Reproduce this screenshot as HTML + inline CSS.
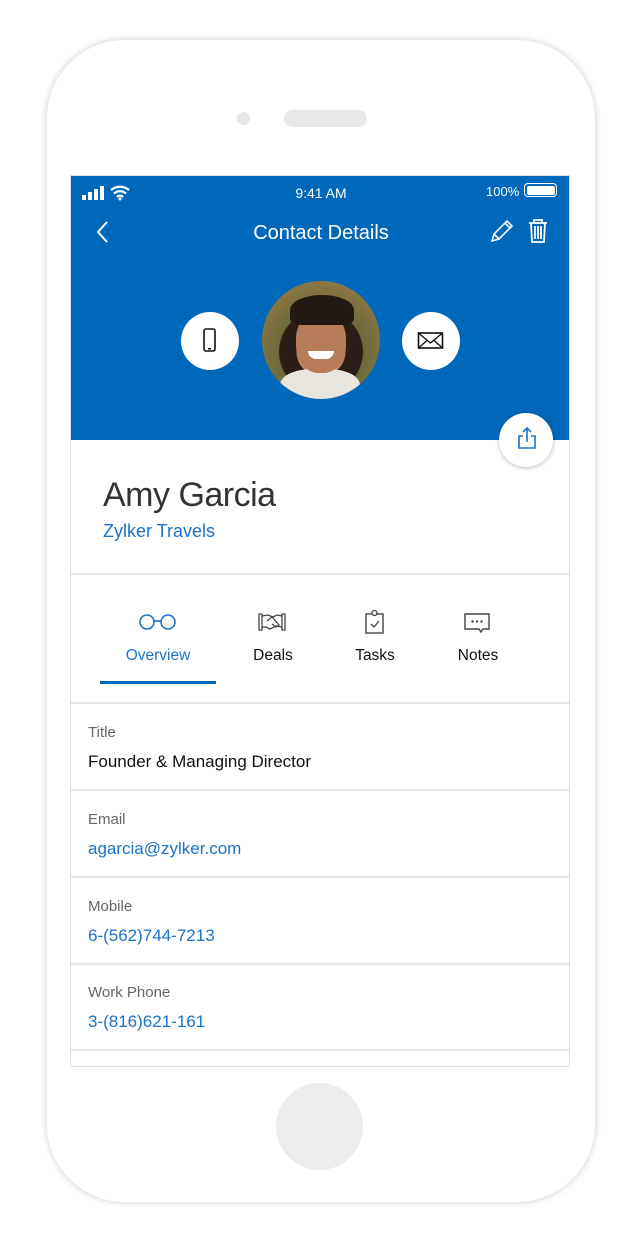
<!DOCTYPE html>
<html><head><style>
body{margin:0;width:640px;height:1240px;background:#fff;position:relative;font-family:"Liberation Sans",sans-serif;overflow:hidden}
.frame{position:absolute;left:45px;top:38px;width:548px;height:1162px;border-radius:80px;background:#fff;border:2px solid #ececec;box-shadow:0 0 6px #e6e6e6}
.screen{position:absolute;left:70px;top:175px;width:500px;height:892px;background:#fff;border:1px solid #ddd;box-sizing:border-box;overflow:hidden}
.abs{position:absolute}
.sep{position:absolute;left:0;right:0;height:2px;background:#e5e5e5}
.lbl{position:absolute;left:17px;font-size:15px;color:#666}
.val{position:absolute;left:17px;font-size:17px}
</style></head><body>
<div class="frame"></div>
<div class="abs" style="left:237px;top:112px;width:13px;height:13px;border-radius:50%;background:#e8e8e8"></div>
<div class="abs" style="left:284px;top:110px;width:83px;height:17px;border-radius:9px;background:#e8e8e8"></div>
<div class="abs" style="left:276px;top:1083px;width:87px;height:87px;border-radius:50%;background:#ececec"></div>
<div class="screen">
 <div class="abs" style="left:0;top:0;width:500px;height:264px;background:#0068ba"></div>
 <svg class="abs" style="left:10px;top:8px" width="60" height="18"><rect x="1" y="11" width="4" height="5" fill="#fff"/><rect x="7" y="8" width="4" height="8" fill="#fff"/><rect x="13" y="5" width="4" height="11" fill="#fff"/><rect x="19" y="2" width="4" height="14" fill="#fff"/><path d="M30 6a14 14 0 0 1 18 0M33 9.5a9 9 0 0 1 12 0M36 13a4 4 0 0 1 6 0" stroke="#fff" stroke-width="2.2" fill="none"/><circle cx="39" cy="15" r="1.5" fill="#fff"/></svg>
 <div class="abs" style="left:0;width:500px;top:9px;text-align:center;color:#fff;font-size:14px">9:41 AM</div>
 <div class="abs" style="left:415px;top:8px;color:#fff;font-size:13px">100%</div>
 <div class="abs" style="left:453px;top:7px;width:33px;height:14px;border:1.5px solid #fff;border-radius:4px;box-sizing:border-box;padding:1.5px"><div style="background:#fff;height:100%;border-radius:2px"></div></div>
 <svg class="abs" style="left:24px;top:44px" width="18" height="24"><path d="M12 2 3 12l9 10" stroke="#fff" stroke-width="2" fill="none"/></svg>
 <div class="abs" style="left:0;width:500px;top:46px;text-align:center;color:#fff;font-size:20px">Contact Details</div>
 <svg class="abs" style="left:418px;top:42px" width="26" height="26"><path d="M3 23l2-7L18 3l5 5L10 21z M5 16l5 5 M16 5l5 5" stroke="#fff" stroke-width="1.6" fill="none"/></svg>
 <svg class="abs" style="left:455px;top:40px" width="24" height="28"><path d="M3 7h18M8 7V4h8v3M5 7l1 19h12l1-19M9 10v13M12 10v13M15 10v13" stroke="#fff" stroke-width="1.8" fill="none"/></svg>
 <div class="abs" style="left:110px;top:136px;width:58px;height:58px;border-radius:50%;background:#fff"></div>
 <svg class="abs" style="left:130px;top:151px" width="18" height="28"><rect x="3" y="2" width="11" height="22" rx="2" stroke="#111" stroke-width="1.6" fill="none"/><rect x="7" y="21" width="3" height="1.5" fill="#111"/></svg>
 <div class="abs" style="left:331px;top:136px;width:58px;height:58px;border-radius:50%;background:#fff"></div>
 <svg class="abs" style="left:346px;top:155px" width="28" height="20"><rect x="1.5" y="2" width="24" height="15" stroke="#111" stroke-width="1.6" fill="none"/><path d="M1.5 2 13.5 12 25.5 2M1.5 17l9-8M25.5 17l-9-8" stroke="#111" stroke-width="1.4" fill="none"/></svg>
 <div class="abs" style="left:191px;top:105px;width:118px;height:118px;border-radius:50%;background:radial-gradient(circle at 50% 60%,#c58a66 0 26%,#2a1d16 27% 45%,#6b6a3a 46%,#a9824a 100%);overflow:hidden"><div class="abs" style="left:18px;top:88px;width:80px;height:40px;background:#e8e4de;border-radius:40% 40% 0 0"></div><div class="abs" style="left:34px;top:30px;width:50px;height:62px;border-radius:45%;background:#b77c5a"></div><div class="abs" style="left:28px;top:14px;width:64px;height:30px;border-radius:50% 50% 20% 20%;background:#231812"></div><div class="abs" style="left:46px;top:70px;width:26px;height:8px;border-radius:0 0 12px 12px;background:#fff"></div></div>
 <div class="abs" style="left:428px;top:237px;width:54px;height:54px;border-radius:50%;background:#fff;box-shadow:0 1px 5px rgba(0,0,0,.25)"></div>
 <svg class="abs" style="left:444px;top:250px" width="24" height="26"><path d="M8 10H4v12h16V10h-4M12 2v14M8 6l4-4 4 4" stroke="#1a73c8" stroke-width="1.6" fill="none"/></svg>
 <div class="abs" style="left:32px;top:300px;font-size:34px;color:#333;letter-spacing:-0.5px">Amy Garcia</div>
 <div class="abs" style="left:32px;top:345px;font-size:18px;color:#1a73c8">Zylker Travels</div>
 <div class="sep" style="top:397px"></div>
 <svg class="abs" style="left:67px;top:437px" width="40" height="18"><circle cx="9" cy="9" r="7" stroke="#1a73c8" stroke-width="1.6" fill="none"/><circle cx="30" cy="9" r="7" stroke="#1a73c8" stroke-width="1.6" fill="none"/><path d="M16 8h7" stroke="#1a73c8" stroke-width="1.6"/></svg>
 <svg class="abs" style="left:186px;top:436px" width="30" height="20"><path d="M2 2v16h3V2zM25 2v16h3V2zM5 4l6-1 5 2 4-2 5 1M5 15l4 0 4 2 6-3 6 1M10 9l5-4 7 8-3 2-4-3" stroke="#444" stroke-width="1.3" fill="none"/></svg>
 <svg class="abs" style="left:293px;top:433px" width="22" height="26"><rect x="2" y="5" width="17" height="19" stroke="#444" stroke-width="1.4" fill="none"/><circle cx="10.5" cy="4" r="2.5" stroke="#444" stroke-width="1.3" fill="#fff"/><path d="M7 15l3 3 5-6" stroke="#444" stroke-width="1.3" fill="none"/></svg>
 <svg class="abs" style="left:392px;top:436px" width="28" height="22"><path d="M2 2h24v15H20l-2 3-2-3H2z" stroke="#444" stroke-width="1.4" fill="none"/><circle cx="9.5" cy="9.5" r="1.2" fill="#444"/><circle cx="14" cy="9.5" r="1.2" fill="#444"/><circle cx="18.5" cy="9.5" r="1.2" fill="#444"/></svg>
 <div class="abs" style="left:29px;width:116px;top:471px;text-align:center;font-size:15.5px;color:#1a73c8">Overview</div>
 <div class="abs" style="left:168px;width:68px;top:471px;text-align:center;font-size:15.5px;color:#111">Deals</div>
 <div class="abs" style="left:270px;width:68px;top:471px;text-align:center;font-size:15.5px;color:#111">Tasks</div>
 <div class="abs" style="left:373px;width:68px;top:471px;text-align:center;font-size:15.5px;color:#111">Notes</div>
 <div class="abs" style="left:29px;top:505px;width:116px;height:3px;background:#0068ba"></div>
 <div class="sep" style="top:526px"></div>
 <div class="lbl" style="top:548px">Title</div><div class="val" style="top:576px;color:#111">Founder &amp; Managing Director</div>
 <div class="sep" style="top:613px"></div>
 <div class="lbl" style="top:635px">Email</div><div class="val" style="top:663px;color:#1a73c8">agarcia@zylker.com</div>
 <div class="sep" style="top:700px"></div>
 <div class="lbl" style="top:722px">Mobile</div><div class="val" style="top:750px;color:#1a73c8">6-(562)744-7213</div>
 <div class="sep" style="top:787px"></div>
 <div class="lbl" style="top:808px">Work Phone</div><div class="val" style="top:836px;color:#1a73c8">3-(816)621-161</div>
 <div class="sep" style="top:873px"></div>
</div>
</body></html>
